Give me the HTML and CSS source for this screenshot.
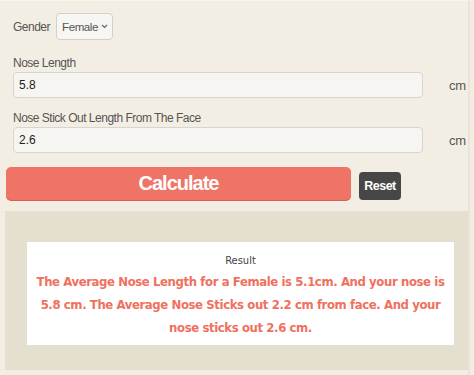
FILE: index.html
```html
<!DOCTYPE html>
<html lang="en">
<head>
  <meta charset="UTF-8">
  <meta name="viewport" content="width=device-width, initial-scale=1">
  <title>Nose Length Calculator</title>
  <link rel="stylesheet" href="styles.css">
</head>
<body>
  <div class="calc">
    <div class="gender-row">
      <label for="gender">Gender</label>
      <span class="select-wrap">
        <select id="gender" class="gender-select">
          <option>Female</option>
          <option>Male</option>
        </select>
        <svg class="chevron" width="7" height="5" viewBox="0 0 7 5"><path d="M1 1 L3.5 3.5 L6 1" fill="none" stroke="#666" stroke-width="1.2"/></svg>
      </span>
    </div>

    <div class="field">
      <label for="noseLength">Nose Length</label>
      <div class="field-row">
        <input type="text" id="noseLength" value="5.8">
        <span class="unit">cm</span>
      </div>
    </div>

    <div class="field">
      <label for="noseOut">Nose Stick Out Length From The Face</label>
      <div class="field-row">
        <input type="text" id="noseOut" value="2.6">
        <span class="unit">cm</span>
      </div>
    </div>

    <div class="buttons">
      <button class="calc-button">Calculate</button>
      <button class="reset-button">Reset</button>
    </div>

    <div class="result-area">
      <div class="result-box">
        <div class="result-title">Result</div>
        <p class="result-text">The Average Nose Length for a Female is 5.1cm. And your nose is 5.8 cm. The Average Nose Sticks out 2.2 cm from face. And your nose sticks out 2.6 cm.</p>
      </div>
    </div>
  </div>
</body>
</html>
```

FILE: styles.css
```css
body {
  margin: 0;
  font-family: 'Liberation Sans', Arial, sans-serif;
  background-color: #f3eee3;
}
.calc {
  width: 468px;
  height: 372px;
  border-top: 1px solid #f7f4ec;
  border-right: 2px solid #e9e4d6;
  padding-top: 12px;
}
.gender-row {
  display: flex;
  align-items: center;
  padding-left: 13px;
  height: 27px;
}
.gender-row label {
  font-size: 12px;
  letter-spacing: -0.5px;
  color: #555;
  margin-right: 6px;
}
.select-wrap {
  position: relative;
  display: inline-block;
}
.gender-select {
  appearance: none;
  -webkit-appearance: none;
  width: 57px;
  height: 27px;
  padding: 0 0 0 5px;
  font-family: 'Liberation Sans', Arial, sans-serif;
  font-size: 11.5px;
  letter-spacing: -0.4px;
  color: #555;
  background-color: #f7f6f3;
  border: 1px solid #d3d0c8;
  border-radius: 4px;
}
.chevron {
  position: absolute;
  right: 5px;
  top: 11px;
  pointer-events: none;
}
.field {
  padding-left: 13px;
  margin-top: 16px;
}
.field + .field {
  margin-top: 13px;
}
.field label {
  display: block;
  font-size: 12px;
  letter-spacing: -0.5px;
  color: #555;
  line-height: 14px;
  margin-bottom: 2px;
}
.field-row {
  display: flex;
  align-items: center;
}
.field-row input {
  box-sizing: border-box;
  width: 410px;
  height: 26px;
  padding: 0 5px;
  font-family: 'Liberation Sans', Arial, sans-serif;
  font-size: 12px;
  color: #222;
  background-color: #f6f5f2;
  border: 1px solid #d9d5cc;
  border-radius: 4px;
}
.unit {
  margin-left: 26px;
  font-size: 13px;
  letter-spacing: -0.3px;
  color: #555;
}
.buttons {
  display: flex;
  align-items: center;
  padding-left: 6px;
  margin-top: 14px;
}
.calc-button {
  width: 345px;
  height: 33px;
  background-color: #f07466;
  color: #fff;
  border: none;
  border-radius: 5px;
  box-shadow: 0 1px 0 #d9604f;
  font-family: 'Liberation Sans', Arial, sans-serif;
  font-weight: bold;
  font-size: 20px;
  letter-spacing: -1px;
  cursor: pointer;
}
.reset-button {
  width: 42px;
  height: 28px;
  margin-left: 8px;
  margin-top: 4px;
  background-color: #474747;
  color: #fff;
  border: none;
  border-radius: 4px;
  font-family: 'Liberation Sans', Arial, sans-serif;
  font-weight: bold;
  font-size: 12.5px;
  letter-spacing: -0.5px;
  padding: 0;
  cursor: pointer;
}
.result-area {
  margin: 11px 0 0 5px;
  width: 463px;
  height: 159px;
  box-sizing: border-box;
  background-color: #e4dfcf;
  padding: 31px 14px 0 22px;
}
.result-box {
  background-color: #fff;
  height: 103px;
  text-align: center;
  padding-top: 12px;
  box-sizing: border-box;
}
.result-title {
  font-family: 'DejaVu Sans Condensed', 'DejaVu Sans', sans-serif;
  font-size: 11px;
  color: #444;
}
.result-text {
  margin: 3px 6px 0;
  font-family: 'DejaVu Sans Condensed', 'DejaVu Sans', sans-serif;
  font-weight: bold;
  font-size: 13px;
  letter-spacing: -0.4px;
  line-height: 23px;
  color: #f0705e;
}
```
